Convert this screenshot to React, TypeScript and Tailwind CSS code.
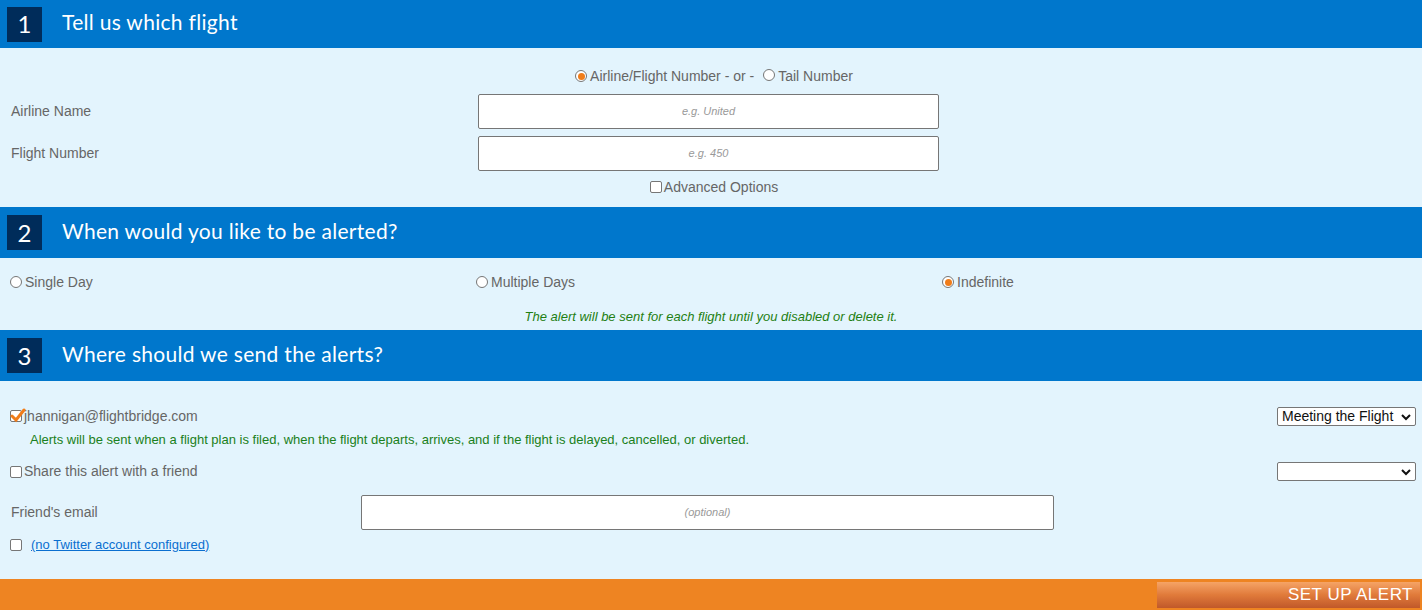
import React, { useState } from 'react';

function Header({ n, title, first }: { n: string; title: string; first?: boolean }) {
  return (
    <div className={`flex items-center bg-[#0077cc] pl-[7px] ${first ? 'h-[48px]' : 'h-[51px]'}`}>
      <div className="w-[35px] h-[35px] bg-[#002c5a] text-white flex items-center justify-center text-[24px] font-['Lato',sans-serif]">
        {n}
      </div>
      <div className="ml-[20px] -mt-[4px] text-white text-[21px] tracking-[0.3px] font-['Lato',sans-serif]">{title}</div>
    </div>
  );
}

function Radio({ checked }: { checked?: boolean }) {
  return (
    <span className="inline-flex w-[12px] h-[12px] rounded-full border border-[#767676] bg-white items-center justify-center mr-[3px]">
      {checked && <span className="w-[7px] h-[7px] rounded-full bg-[#f07d1a]" />}
    </span>
  );
}

function Check({ checked }: { checked?: boolean }) {
  return (
    <span className="relative inline-block w-[12px] h-[12px] rounded-[2px] border border-[#767676] bg-white mr-[2px]">
      {checked && (
        <svg className="absolute -left-[1px] -top-[3px]" width="16" height="15" viewBox="0 0 16 15">
          <path d="M2 8 L6 12 L14 2" stroke="#f07d1a" strokeWidth="3" fill="none" strokeLinecap="round" />
        </svg>
      )}
    </span>
  );
}

function Chevron() {
  return (
    <svg width="10" height="7" viewBox="0 0 10 7" className="absolute right-[4px] top-[6px]">
      <path d="M1 1 L5 5 L9 1" stroke="#111" strokeWidth="2" fill="none" />
    </svg>
  );
}

export default function App() {
  const [mode] = useState('flight');
  return (
    <div className="w-[1422px] h-[610px] overflow-hidden bg-[#e3f4fd] text-[#666] text-[14px] font-['Liberation_Sans',Arial,sans-serif]">
      <Header n="1" title="Tell us which flight" first />
      <div className="h-[159px] pt-[20px]">
        <div className="flex items-center justify-center h-[16px] ml-[6px]">
          <Radio checked={mode === 'flight'} />
          <span>Airline/Flight Number - or -</span>
          <span className="ml-[9px]"><Radio /></span>
          <span>Tail Number</span>
        </div>
        <div className="flex items-center mt-[10px] h-[35px]">
          <div className="w-[478px] pl-[11px]">Airline Name</div>
          <div className="w-[461px] h-[35px] bg-white border border-[#767676] rounded-[2px] flex items-center justify-center italic text-[11px] text-[#999]">
            e.g. United
          </div>
        </div>
        <div className="flex items-center mt-[7px] h-[35px]">
          <div className="w-[478px] pl-[11px]">Flight Number</div>
          <div className="w-[461px] h-[35px] bg-white border border-[#767676] rounded-[2px] flex items-center justify-center italic text-[11px] text-[#999]">
            e.g. 450
          </div>
        </div>
        <div className="flex items-center justify-center mt-[8px] h-[16px] ml-[6px]">
          <Check />
          <span>Advanced Options</span>
        </div>
      </div>

      <Header n="2" title="When would you like to be alerted?" />
      <div className="h-[72px] pt-[16px]">
        <div className="flex items-center pl-[10px] h-[16px]">
          <div className="w-[466px] flex items-center"><Radio /><span>Single Day</span></div>
          <div className="w-[466px] flex items-center"><Radio /><span>Multiple Days</span></div>
          <div className="w-[466px] flex items-center"><Radio checked /><span>Indefinite</span></div>
        </div>
        <div className="mt-[17px] text-center italic text-[13px] text-[#1f7f12]">
          The alert will be sent for each flight until you disabled or delete it.
        </div>
      </div>

      <Header n="3" title="Where should we send the alerts?" />
      <div className="h-[198px] pt-[26px]">
        <div className="flex items-center justify-between pl-[10px] pr-[6px] h-[18px]">
          <div className="flex items-center"><Check checked /><span>jhannigan@flightbridge.com</span></div>
          <div className="relative w-[139px] h-[19px] bg-white border border-[#767676] rounded-[2px] text-[14px] text-[#111] pl-[4px] leading-[17px]">
            Meeting the Flight
            <Chevron />
          </div>
        </div>
        <div className="pl-[30px] mt-[5px] text-[13px] text-[#1a8020]">
          Alerts will be sent when a flight plan is filed, when the flight departs, arrives, and if the flight is delayed, cancelled, or diverted.
        </div>
        <div className="flex items-center justify-between pl-[10px] pr-[6px] h-[18px] mt-[13px]">
          <div className="flex items-center"><Check /><span>Share this alert with a friend</span></div>
          <div className="relative w-[139px] h-[19px] bg-white border border-[#767676] rounded-[2px]">
            <Chevron />
          </div>
        </div>
        <div className="flex items-center mt-[14px] h-[35px]">
          <div className="w-[361px] pl-[11px]">Friend's email</div>
          <div className="w-[693px] h-[35px] bg-white border border-[#767676] rounded-[2px] flex items-center justify-center italic text-[11px] text-[#999]">
            (optional)
          </div>
        </div>
        <div className="flex items-center pl-[10px] mt-[7px] h-[16px]">
          <Check />
          <a href="#" className="ml-[7px] text-[13px] text-[#0a6fd0] underline">(no Twitter account configured)</a>
        </div>
      </div>

      <div className="h-[31px] bg-[#ee8422] flex justify-end items-start pt-[3px] pr-[2px]">
        <button className="w-[263px] h-[26px] bg-gradient-to-b from-[#f5a466] via-[#e07a3a] to-[#c0582a] text-white text-[17px] tracking-[0.5px] text-right pr-[7px] font-['Liberation_Sans',Arial,sans-serif]">
          SET UP ALERT
        </button>
      </div>
    </div>
  );
}
